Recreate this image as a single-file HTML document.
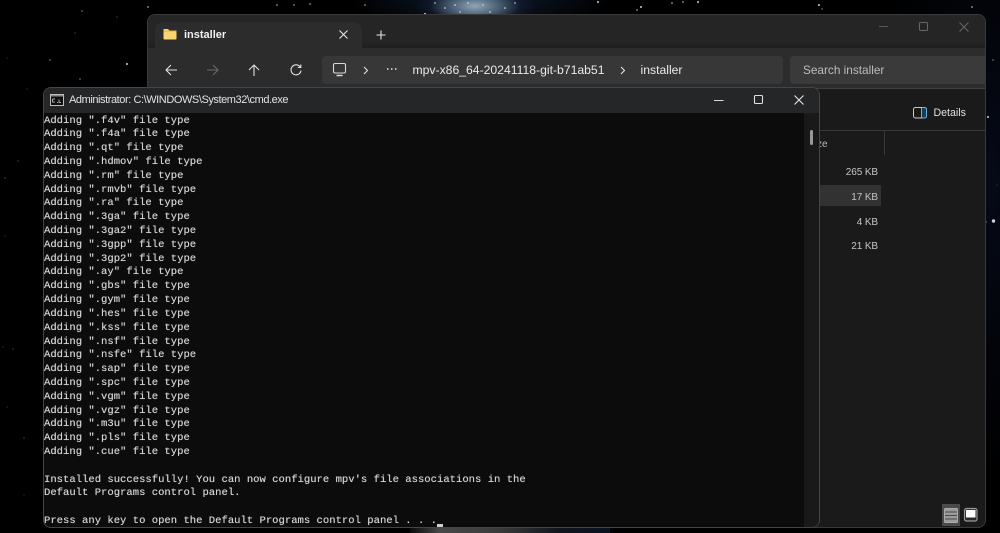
<!DOCTYPE html>
<html>
<head>
<meta charset="utf-8">
<style>
html,body{margin:0;padding:0;width:1000px;height:533px;overflow:hidden;background:#000;}
body{position:relative;font-family:"Liberation Sans",sans-serif;}
.abs{position:absolute;}
#bg{left:0;top:0;width:1000px;height:533px;background:
radial-gradient(ellipse 60px 24px at 475px 6px,#8fa5b8 0%,#4a5f74 40%,rgba(20,30,50,.6) 75%,rgba(0,0,0,0) 100%),
radial-gradient(ellipse 130px 30px at 480px 0px,rgba(20,35,60,.8),rgba(0,0,0,0) 100%),
radial-gradient(ellipse 120px 300px at 985px 180px,#060a18,rgba(0,0,0,0) 100%),
linear-gradient(90deg,#000 0,#000 100%);}
#bottom{left:410px;top:527px;width:200px;height:6px;background:linear-gradient(90deg,#0a0a0a,#484848 15%,#3a3a3a 45%,#10141c 75%,#0a1220 100%);}
#exp{left:147px;top:14px;width:837px;height:512px;background:#1a1a1a;border:1px solid #3a3a3a;border-radius:8px;overflow:hidden;box-sizing:content-box;}
#tabbar{left:0;top:0;width:837px;height:33px;background:linear-gradient(#252525 0,#252525 80%,#1f1f1f 100%);}
#tab{left:7px;top:7px;width:207px;height:26px;background:#2c2c2c;border-radius:8px 8px 0 0;}
#nav{left:0;top:33px;width:837px;height:41px;background:#2c2c2c;border-bottom:1px solid #3f3f3f;box-sizing:border-box;}
#addr{left:174px;top:41px;width:461px;height:28px;background:#373737;border-radius:4px;}
#search{left:642px;top:41px;width:200px;height:28px;background:#3a3a3a;border-radius:4px;}
#cmd{left:43px;top:87px;width:775px;height:439px;background:#0c0c0c;border:1px solid #454545;border-radius:8px;overflow:hidden;}
#cmdtitle{left:0;top:0;width:775px;height:25px;background:#252627;}
#scroll{left:760px;top:25px;width:15px;height:414px;background:#191919;}
#thumb{left:766px;top:42px;width:3px;height:15px;background:#9a9a9a;border-radius:2px;}
pre{position:absolute;left:0;top:26.5px;margin:0;font-family:"Liberation Mono",monospace;font-size:10.57px;line-height:13.82px;color:#d4d4d4;letter-spacing:0;text-shadow:0 0 .5px #bdbdbd;}
.t{position:absolute;white-space:nowrap;color:#e6e6e6;}
.kb{font-size:10px;letter-spacing:-.1px;color:#c4c4c4;right:107px;}
svg{position:absolute;overflow:visible;}
</style>
</head>
<body>
<div id="bg" class="abs"></div>
<div id="bottom" class="abs"></div>

<svg style="left:0;top:0" width="1000" height="533">
<g fill="#c8cdd8">
<circle cx="148" cy="7" r=".8"/><circle cx="82" cy="11" r=".6"/><circle cx="277" cy="5" r=".7"/><circle cx="294" cy="5" r=".7"/><circle cx="310" cy="4" r=".7"/><circle cx="365" cy="5" r=".7"/>
<circle cx="127" cy="64" r="1"/><circle cx="50" cy="60" r=".6"/><circle cx="80" cy="79" r=".6"/><circle cx="598" cy="2" r="1"/><circle cx="641" cy="7" r="1"/><circle cx="698" cy="2" r="1"/><circle cx="819" cy="5" r="1"/><circle cx="672" cy="3" r=".8"/><circle cx="683" cy="2" r=".8"/><circle cx="637" cy="10" r=".7"/><circle cx="822" cy="9" r=".6"/>
<circle cx="972" cy="7" r=".8"/><circle cx="993" cy="60" r=".6"/><circle cx="988" cy="117" r="1"/><circle cx="993.500" cy="221" r="1.700"/><circle cx="986" cy="222" r=".6"/>
</g>
<g fill="#5a5f68">
<circle cx="75" cy="33" r=".6"/><circle cx="117" cy="17" r=".6"/><circle cx="7" cy="58" r=".5"/><circle cx="27" cy="89" r=".5"/><circle cx="5" cy="178" r=".6"/><circle cx="18" cy="161" r=".6"/><circle cx="13" cy="349" r=".6"/><circle cx="5" cy="236" r=".5"/><circle cx="3" cy="347" r=".5"/><circle cx="7" cy="407" r=".5"/><circle cx="24" cy="438" r=".6"/><circle cx="24" cy="495" r=".5"/><circle cx="997" cy="185" r=".5"/>
</g>
<g fill="#dfe8f0">
<circle cx="425" cy="14" r="1"/><circle cx="445" cy="8" r=".8"/><circle cx="455" cy="5" r=".8"/><circle cx="468" cy="3" r=".8"/><circle cx="490" cy="12" r=".8"/><circle cx="505" cy="8" r=".8"/><circle cx="515" cy="3" r=".7"/><circle cx="435" cy="3" r=".7"/><circle cx="460" cy="12" r=".7"/><circle cx="483" cy="5" r=".7"/>
</g>
</svg>

<div id="exp" class="abs">
  <div id="tabbar" class="abs"></div>
  <div id="nav" class="abs"></div>
  <div id="tab" class="abs"></div>
  <div id="addr" class="abs"></div>
  <div id="search" class="abs"></div>

  <svg style="left:15px;top:13px" width="14" height="12" viewBox="0 0 14 12"><path d="M.5 1h4.500l1.500 1.500h7v8a1 1 0 0 1-1 1h-11a1 1 0 0 1-1-1z" fill="#f8d56e"/><path d="M.5 3h13" stroke="#e2ad3e" stroke-width="1"/></svg>
  <div class="t" style="left:36px;top:14px;font-size:11px;font-weight:bold;color:#f0f0f0;">installer</div>
  <svg style="left:191px;top:15px" width="9" height="9"><path d="M.5.500l8 8M8.500.500l-8 8" stroke="#e4e4e4" stroke-width="1.100" fill="none"/></svg>
  <svg style="left:228px;top:15px" width="10" height="10"><path d="M5 .5v9M.5 5h9" stroke="#e4e4e4" stroke-width="1.100" fill="none"/></svg>

  <svg style="left:731px;top:11px" width="10" height="2"><path d="M0 .5h9" stroke="#555" stroke-width="1"/></svg>
  <svg style="left:771px;top:7px" width="9" height="9"><rect x=".5" y=".5" width="8" height="8" rx="1" stroke="#666" fill="none"/></svg>
  <svg style="left:811px;top:7px" width="10" height="10"><path d="M.5.500l9 9M9.500.500l-9 9" stroke="#666" stroke-width="1" fill="none"/></svg>

  <svg style="left:17px;top:49px" width="13" height="12"><path d="M12 6H1M6 1L1 6l5 5" stroke="#e0e0e0" stroke-width="1.100" fill="none"/></svg>
  <svg style="left:58px;top:49px" width="13" height="12"><path d="M1 6h11M7 1l5 5-5 5" stroke="#6a6a6a" stroke-width="1.100" fill="none"/></svg>
  <svg style="left:100px;top:49px" width="12" height="13"><path d="M6 12V1M1 6l5-5 5 5" stroke="#e0e0e0" stroke-width="1.100" fill="none"/></svg>
  <svg style="left:142px;top:49px" width="12" height="12"><path d="M10.300 3.200A5 5 0 1 0 11 6.500" stroke="#e0e0e0" stroke-width="1.100" fill="none"/><path d="M10.800.5v3h-3" stroke="#e0e0e0" stroke-width="1.100" fill="none"/></svg>
  <svg style="left:185px;top:48px" width="14" height="14"><rect x=".5" y=".5" width="12" height="9.500" rx="1.500" stroke="#d8d8d8" stroke-width="1.100" fill="none"/><path d="M3.500 12.500h6" stroke="#d8d8d8" stroke-width="1.500"/></svg>
  <svg style="left:215px;top:51px" width="6" height="9"><path d="M1 1l3.500 3.500L1 8" stroke="#e0e0e0" stroke-width="1.100" fill="none"/></svg>
  <svg style="left:238px;top:53px" width="12" height="3"><path d="M1 1h1.500M5 1h1.500M9 1h1.500" stroke="#e6e6e6" stroke-width="1.500"/></svg>
  <div class="t" style="left:264.500px;top:48px;font-size:12.2px;color:#eaeaea;">mpv-x86_64-20241118-git-b71ab51</div>
  <svg style="left:472px;top:51px" width="6" height="9"><path d="M1 1l3.500 3.500L1 8" stroke="#e0e0e0" stroke-width="1.100" fill="none"/></svg>
  <div class="t" style="left:492.500px;top:48px;font-size:12.2px;color:#eaeaea;">installer</div>
  <div class="t" style="left:655px;top:48px;font-size:11.8px;color:#bdbdbd;">Search installer</div>

  <svg style="left:765px;top:92px" width="15" height="12"><rect x=".5" y=".5" width="13" height="10.500" rx="2" stroke="#c9c9c9" fill="none"/><path d="M8.500 1v9.500" stroke="#5fb2e6" stroke-width="1"/><path d="M9 .5h2.500a2 2 0 0 1 2 2v6.500a2 2 0 0 1-2 2H9" stroke="#5fb2e6" fill="#1c3a50"/></svg>
  <div class="t" style="left:785.500px;top:91px;font-size:10.6px;line-height:14px;color:#e0e0e0;">Details</div>

  <div class="abs" style="left:0;top:115px;width:837px;height:1px;background:#3a3a3a;"></div>
  <div class="abs" style="left:736px;top:116px;width:1px;height:24px;background:#3a3a3a;"></div>
  <div class="t" style="left:669px;top:124px;font-size:10px;color:#b8b8b8;">ze</div>
  <div class="abs" style="left:600px;top:170px;width:133px;height:21px;background:#323232;"></div>
  <div class="t kb" style="top:152px;">265 KB</div>
  <div class="t kb" style="top:177px;">17 KB</div>
  <div class="t kb" style="top:202px;">4 KB</div>
  <div class="t kb" style="top:226px;">21 KB</div>

  <div class="abs" style="left:794px;top:489px;width:18px;height:22px;background:#4a4a4a;"></div>
  <svg style="left:796px;top:493px" width="15" height="15"><rect x=".5" y=".5" width="13" height="14" rx="1" fill="#9a9a9a" stroke="#aaa"/><path d="M1 4h12M1 7.500h12M1 11h12" stroke="#4a4a4a" stroke-width="1"/></svg>
  <svg style="left:816px;top:493px" width="14" height="14"><rect x=".5" y=".5" width="12.500" height="12.500" rx="2" fill="#2a2a2a" stroke="#9a9a9a" stroke-width="1.200"/><rect x="2" y="2" width="9.500" height="7.500" fill="#fff"/></svg>
</div>

<div id="cmd" class="abs">
  <div id="cmdtitle" class="abs"></div>
  <div id="scroll" class="abs"></div>
  <div id="thumb" class="abs"></div>
  <svg style="left:6px;top:6px" width="14" height="12"><rect x=".5" y=".5" width="13" height="11" fill="#111" stroke="#bcbcbc"/><rect x="1" y="1" width="12" height="1.500" fill="#8a8a8a"/><path d="M2.500 5h2.500M2.500 5v3h2.500M7 8.500h1M9 5.500v3h2" stroke="#d8d8d8" stroke-width=".8" fill="none"/></svg>
  <div class="t" style="left:25px;top:6px;font-size:11px;color:#e2e2e2;letter-spacing:-.43px;">Administrator: C:\WINDOWS\System32\cmd.exe</div>
  <svg style="left:670px;top:12px" width="10" height="2"><path d="M0 .5h9.500" stroke="#d8d8d8" stroke-width="1"/></svg>
  <svg style="left:710px;top:7px" width="10" height="10"><rect x=".5" y=".5" width="8" height="8" rx="1" stroke="#e0e0e0" stroke-width="1.100" fill="none"/></svg>
  <svg style="left:750px;top:7px" width="10" height="10"><path d="M.5.500l9 9M9.500.500l-9 9" stroke="#e6e6e6" stroke-width="1.100" fill="none"/></svg>
  <pre>Adding ".f4v" file type
Adding ".f4a" file type
Adding ".qt" file type
Adding ".hdmov" file type
Adding ".rm" file type
Adding ".rmvb" file type
Adding ".ra" file type
Adding ".3ga" file type
Adding ".3ga2" file type
Adding ".3gpp" file type
Adding ".3gp2" file type
Adding ".ay" file type
Adding ".gbs" file type
Adding ".gym" file type
Adding ".hes" file type
Adding ".kss" file type
Adding ".nsf" file type
Adding ".nsfe" file type
Adding ".sap" file type
Adding ".spc" file type
Adding ".vgm" file type
Adding ".vgz" file type
Adding ".m3u" file type
Adding ".pls" file type
Adding ".cue" file type

Installed successfully! You can now configure mpv's file associations in the
Default Programs control panel.

Press any key to open the Default Programs control panel . . .</pre>
  <div class="abs" style="left:393px;top:436px;width:6px;height:3px;background:#cfcfcf;"></div>
</div>
</body>
</html>
